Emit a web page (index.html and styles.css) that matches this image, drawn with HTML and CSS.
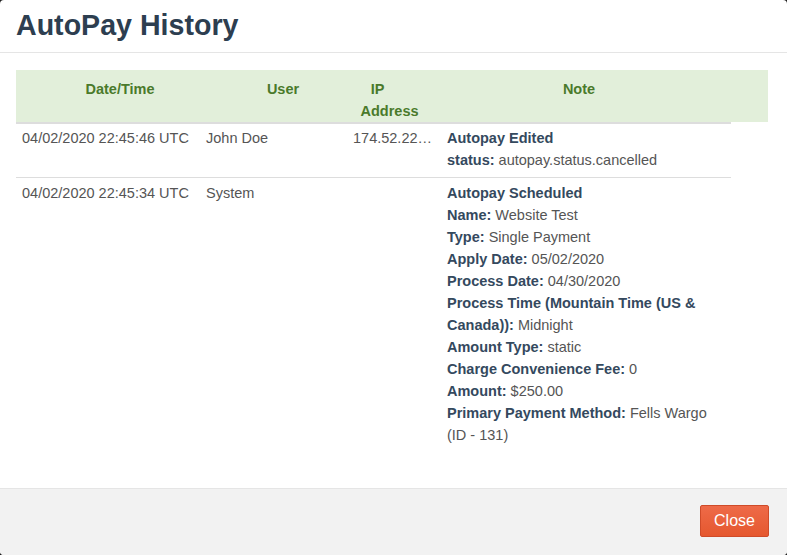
FILE: index.html
```html
<!DOCTYPE html>
<html lang="en">
<head>
<meta charset="utf-8">
<title>AutoPay History</title>
<link rel="stylesheet" href="styles.css">
</head>
<body>
<div class="modal">
  <div class="modal-header">
    <h1 class="modal-title">AutoPay History</h1>
  </div>
  <div class="modal-body">
    <div class="thead">
      <div class="th th-date">Date/Time</div>
      <div class="th th-user">User</div>
      <div class="th th-ip"><span class="ip-first">IP</span> Address</div>
      <div class="th th-note">Note</div>
      <div class="th th-pad"></div>
    </div>
    <div class="tbody">
      <div class="tr">
        <div class="td td-date">04/02/2020 22:45:46 UTC</div>
        <div class="td td-user">John Doe</div>
        <div class="td td-ip"><span class="ellip">174.52.22.118</span></div>
        <div class="td td-note">
          <div class="note-title">Autopay Edited</div>
          <div><b>status:</b> autopay.status.cancelled</div>
        </div>
      </div>
      <div class="tr">
        <div class="td td-date">04/02/2020 22:45:34 UTC</div>
        <div class="td td-user">System</div>
        <div class="td td-ip"></div>
        <div class="td td-note">
          <div class="note-title">Autopay Scheduled</div>
          <div><b>Name:</b> Website Test</div>
          <div><b>Type:</b> Single Payment</div>
          <div><b>Apply Date:</b> 05/02/2020</div>
          <div><b>Process Date:</b> 04/30/2020</div>
          <div><b>Process Time (Mountain Time (US &amp; Canada)):</b> Midnight</div>
          <div><b>Amount Type:</b> static</div>
          <div><b>Charge Convenience Fee:</b> 0</div>
          <div><b>Amount:</b> $250.00</div>
          <div><b>Primary Payment Method:</b> Fells Wargo (ID - 131)</div>
        </div>
      </div>
    </div>
  </div>
  <div class="modal-footer">
    <button class="btn-close" type="button">Close</button>
  </div>
</div>
</body>
</html>
```

FILE: styles.css
```css
html, body {
  margin: 0;
  padding: 0;
  height: 100%;
}
body {
  background: #1e1e1e;
  font-family: "Liberation Sans", Arial, sans-serif;
}
.modal {
  height: 555px;
  background: #ffffff;
  border-radius: 4px;
  overflow: hidden;
  display: flex;
  flex-direction: column;
}
.modal-header {
  padding: 9px 16px 11px;
  border-bottom: 1px solid #e5e5e5;
}
.modal-title {
  margin: 0;
  font-size: 28.6px;
  line-height: 32px;
  font-weight: bold;
  color: #2d3e50;
}
.modal-body {
  flex: 1;
  padding: 17px 19px 0 16px;
}
.thead {
  display: grid;
  grid-template-columns: 208px 118px 95px 284px 1fr;
  background: #e2efda;
  height: 52px;
  font-size: 14.5px;
  line-height: 22px;
  font-weight: bold;
  color: #4a7a2b;
}
.th {
  padding: 8px 6px 0;
  text-align: center;
}
.th-ip {
  padding: 8px 12px 0;
}
.ip-first {
  padding-right: 24px;
}
.tbody {
  width: 715px;
  border-top: 2px solid #dddddd;
  font-size: 14.5px;
  line-height: 22px;
  color: #555555;
}
.tr {
  display: grid;
  grid-template-columns: 184px 147px 94px 290px;
  border-bottom: 1px solid #dddddd;
}
.tr:last-child {
  border-bottom: none;
}
.td {
  padding: 3px 6px 6px;
  min-width: 0;
}
.tr + .tr .td {
  padding-top: 4px;
}
.td-ip {
  text-align: right;
}
.ellip {
  display: block;
  white-space: nowrap;
  overflow: hidden;
  text-overflow: ellipsis;
  text-align: left;
}
.td-note b,
.note-title {
  font-weight: bold;
  color: #34495e;
}
.modal-footer {
  border-top: 1px solid #e5e5e5;
  background: #f2f2f2;
  display: flex;
  justify-content: flex-end;
  align-items: flex-start;
  padding: 16px 18px 0;
  box-sizing: border-box;
  height: 67px;
}
.btn-close {
  width: 69px;
  height: 32px;
  border: 1px solid #cf4b29;
  border-radius: 2px;
  background: linear-gradient(#ee6a48, #e5582f);
  color: #ffffff;
  font-family: "Liberation Sans", Arial, sans-serif;
  font-size: 16px;
  line-height: 20px;
  padding: 0;
  cursor: pointer;
}
```
